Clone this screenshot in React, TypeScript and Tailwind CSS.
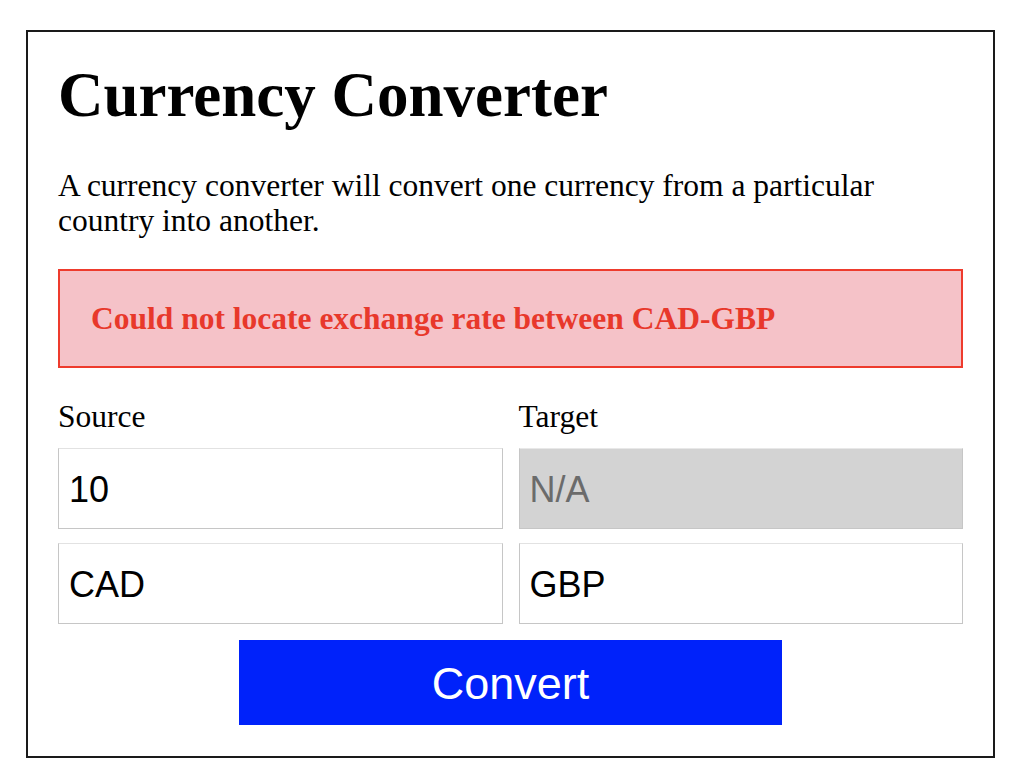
export default function App() {
  const serif = { fontFamily: '"Liberation Serif", "Times New Roman", serif' };
  const sans = { fontFamily: '"Liberation Sans", Arial, sans-serif' };

  return (
    <div className="min-h-[784px] bg-white pt-[30px]" style={serif}>
      <div className="ml-[26px] w-[969px] border-2 border-[#1a1a1a] px-[30px] pt-[32px] pb-[31px] text-black">
        {/* Header */}
        <h1 className="text-[63px] font-bold leading-none">Currency Converter</h1>
        <p className="mt-[41px] text-[31.5px] leading-[35px]">
          A currency converter will convert one currency from a particular country into another.
        </p>

        {/* Error */}
        <div className="mt-[31px] flex h-[99px] items-center border-2 border-[#ee3b2d] bg-[#f5c2c8] pl-[31px]">
          <span className="text-[31.5px] font-bold leading-[35px] text-[#e8382b]">
            Could not locate exchange rate between CAD-GBP
          </span>
        </div>

        {/* Form */}
        <div className="mt-[31px] grid grid-cols-2 gap-x-4">
          <label className="text-[31.5px] leading-[35px]">Source</label>
          <label className="text-[31.5px] leading-[35px]">Target</label>

          <input
            readOnly
            value="10"
            style={sans}
            className="mt-[14px] h-[81px] w-full border border-[#c6c6c6] border-t-[#e2e2e2] bg-white px-[10px] pt-[3px] text-[36px] text-black outline-none"
          />
          <input
            disabled
            value="N/A"
            style={sans}
            className="mt-[14px] h-[81px] w-full border border-[#c6c6c6] border-t-[#e8e8e8] bg-[#d3d3d3] px-[10px] pt-[3px] text-[36px] text-[#6b6b6b] outline-none"
          />

          <input
            readOnly
            value="CAD"
            style={sans}
            className="mt-[14px] h-[81px] w-full border border-[#c6c6c6] border-t-[#e2e2e2] bg-white px-[10px] pt-[3px] text-[36px] text-black outline-none"
          />
          <input
            readOnly
            value="GBP"
            style={sans}
            className="mt-[14px] h-[81px] w-full border border-[#c6c6c6] border-t-[#e2e2e2] bg-white px-[10px] pt-[3px] text-[36px] text-black outline-none"
          />
        </div>

        <div className="mt-4 flex justify-center">
          <button
            style={sans}
            className="h-[85px] w-[60%] bg-[#0022fa] pt-[3px] text-[45px] text-white"
          >
            Convert
          </button>
        </div>
      </div>
    </div>
  );
}
